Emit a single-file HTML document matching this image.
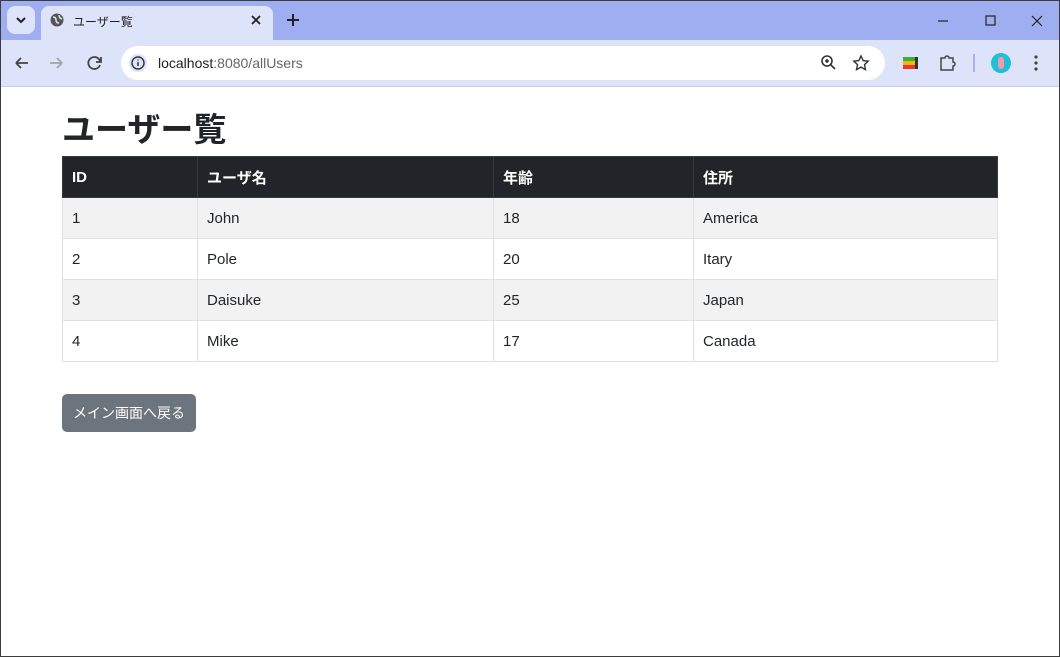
<!DOCTYPE html>
<html><head><meta charset="utf-8"><style>
*{box-sizing:border-box;margin:0;padding:0}
body{width:1060px;height:657px;overflow:hidden;font-family:"Liberation Sans","Noto Sans CJK JP",sans-serif;background:#fff;position:relative}
.frame{position:absolute;inset:0;border:1px solid #3c3c3c;pointer-events:none;z-index:9}
.tabbar{position:absolute;left:0;top:0;width:1060px;height:40px;background:#9eaef0}
.toolbar{position:absolute;left:0;top:40px;width:1060px;height:47px;background:#dde3f9;border-bottom:1px solid #c6cbe0}
.tab{position:absolute;left:41px;top:6px;width:232px;height:34px;background:#dde3f9;border-radius:8px 8px 0 0;font-size:12px;color:#222}
.dd{position:absolute;left:7px;top:6px;width:28px;height:28px;background:#dde3f9;border-radius:8px}
.omni{position:absolute;left:121px;top:46px;width:764px;height:34px;background:#fff;border-radius:17px}
.url{position:absolute;left:158px;top:55px;font-size:14px;color:#222}
.url span{color:#666}
h1{position:absolute;left:62px;top:106px;font-size:33px;line-height:48px;font-weight:bold;color:#212529}
table{position:absolute;left:62px;top:156px;width:936px;border-collapse:collapse;font-size:15px;color:#212529}
td,th{border:1px solid #dee2e6;height:41px;padding:0 9px;text-align:left;vertical-align:middle}
th{background:#212529;color:#fff;border-color:#373b3e;font-weight:bold}
tr.s td{background:#f2f2f2}
.btn{position:absolute;left:62px;top:394px;width:134px;height:38px;background:#6c757d;color:#fff;border-radius:5px;font-size:14px;line-height:38px;text-align:center}
</style></head><body>
<div class="tabbar"></div>
<div class="dd"></div>
<svg style="position:absolute;left:15px;top:15px" width="12" height="10"><path d="M2 3l4 4 4-4" stroke="#222" stroke-width="2" fill="none"/></svg>
<div class="tab">
<svg style="position:absolute;left:9px;top:7px" width="14" height="14"><circle cx="7" cy="7" r="6.5" fill="#555"/><path d="M3 4q3 0 3 3t3 3M9 2q0 3 3 4" stroke="#dde3f9" stroke-width="1.5" fill="none"/></svg>
<span style="position:absolute;left:32px;top:7px">ユーザー覧</span>
<svg style="position:absolute;left:210px;top:9px" width="10" height="10"><path d="M1 1l8 8M9 1l-8 8" stroke="#222" stroke-width="1.8"/></svg>
</div>
<svg style="position:absolute;left:286px;top:13px" width="14" height="14"><path d="M7 1v12M1 7h12" stroke="#222" stroke-width="2"/></svg>
<svg style="position:absolute;left:937px;top:15px" width="110" height="12"><path d="M1 6h10" stroke="#222" stroke-width="1.2"/><rect x="49" y="1" width="9" height="9" fill="none" stroke="#222" stroke-width="1.2"/><path d="M95 1l10 10M105 1l-10 10" stroke="#222" stroke-width="1.2"/></svg>
<div class="toolbar"></div>
<svg style="position:absolute;left:14px;top:55px" width="90" height="16"><path d="M2 8h12M2 8l5-5M2 8l5 5" stroke="#444" stroke-width="1.8" fill="none"/><path d="M36 8h12M48 8l-5-5M48 8l-5 5" stroke="#9aa" stroke-width="1.8" fill="none"/><path d="M86 6a6 6 0 1 0 0 4M87 2v5h-5" stroke="#444" stroke-width="1.8" fill="none"/></svg>
<div class="omni"></div>
<svg style="position:absolute;left:129px;top:54px" width="18" height="18"><circle cx="9" cy="9" r="9" fill="#dde3f9"/><circle cx="9" cy="9" r="6" fill="none" stroke="#333" stroke-width="1.4"/><path d="M9 8v4M9 5.5v1" stroke="#333" stroke-width="1.5"/></svg>
<div class="url">localhost<span>:8080/allUsers</span></div>
<svg style="position:absolute;left:820px;top:54px" width="50" height="18"><circle cx="7" cy="7" r="5" fill="none" stroke="#333" stroke-width="1.6"/><path d="M11 11l4 4M5 7h4M7 5v4" stroke="#333" stroke-width="1.6"/><path d="M41 2l2.2 4.6 5 .6-3.7 3.4 1 5-4.5-2.5-4.5 2.5 1-5-3.7-3.4 5-.6z" fill="none" stroke="#333" stroke-width="1.4"/></svg>
<svg style="position:absolute;left:903px;top:55px" width="16" height="16"><rect x="0" y="2" width="14" height="4" fill="#3cae3c"/><rect x="0" y="6" width="14" height="4" fill="#f2b90c"/><rect x="0" y="10" width="14" height="4" fill="#e33"/><rect x="12" y="2" width="3" height="12" fill="#333"/></svg>
<svg style="position:absolute;left:938px;top:53px" width="20" height="20"><path d="M3 5h4a2 2 0 0 1 4 0h4v4a2 2 0 0 1 0 4v4H3z" fill="none" stroke="#444" stroke-width="1.5"/></svg>
<div style="position:absolute;left:973px;top:54px;width:2px;height:18px;background:#a8b4e8"></div>
<div style="position:absolute;left:991px;top:53px;width:20px;height:20px;border-radius:50%;background:#1fbfd6"></div>
<div style="position:absolute;left:998px;top:57px;width:6px;height:12px;border-radius:3px;background:#f39ab0"></div>
<svg style="position:absolute;left:1033px;top:55px" width="6" height="16"><circle cx="3" cy="2" r="1.6" fill="#444"/><circle cx="3" cy="8" r="1.6" fill="#444"/><circle cx="3" cy="14" r="1.6" fill="#444"/></svg>

<h1>ユーザー覧</h1>
<table>
<colgroup><col style="width:135px"><col style="width:296px"><col style="width:200px"><col></colgroup>
<tr><th>ID</th><th>ユーザ名</th><th>年齢</th><th>住所</th></tr>
<tr class="s"><td>1</td><td>John</td><td>18</td><td>America</td></tr>
<tr><td>2</td><td>Pole</td><td>20</td><td>Itary</td></tr>
<tr class="s"><td>3</td><td>Daisuke</td><td>25</td><td>Japan</td></tr>
<tr><td>4</td><td>Mike</td><td>17</td><td>Canada</td></tr>
</table>
<div class="btn">メイン画面へ戻る</div>
<div class="frame"></div>
</body></html>
